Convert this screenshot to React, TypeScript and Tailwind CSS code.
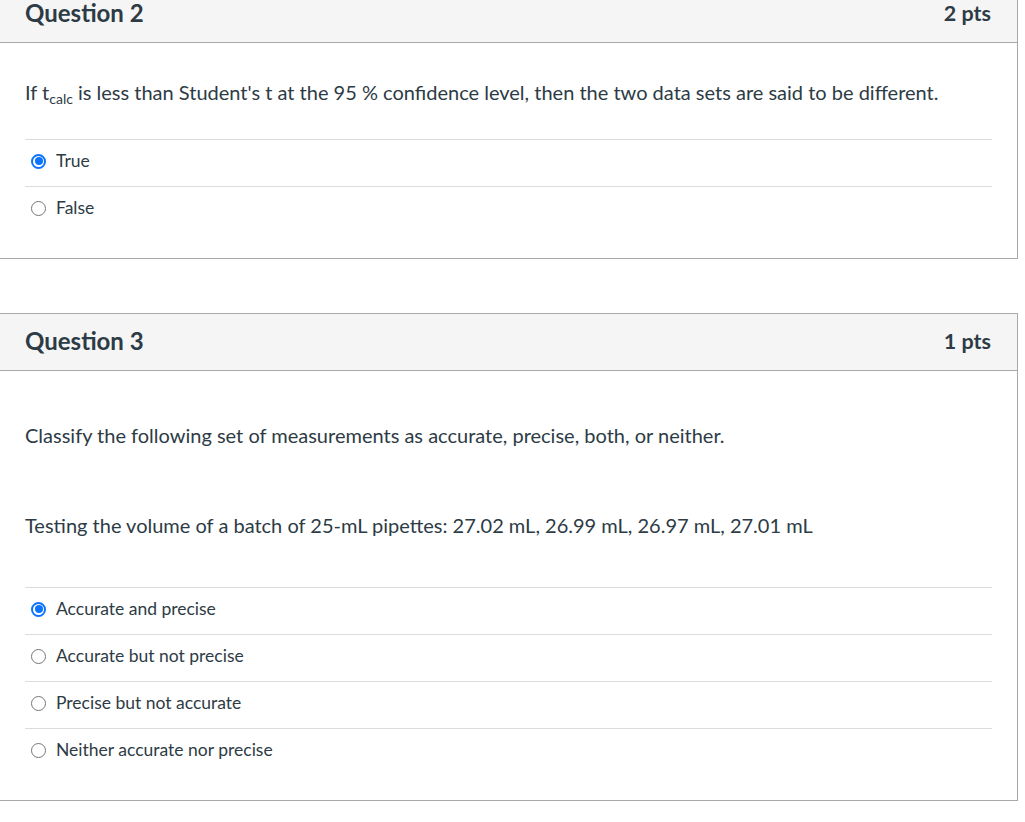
import React from "react";

function Radio({ checked }: { checked: boolean }) {
  return checked ? (
    <span className="flex h-[15px] w-[15px] shrink-0 items-center justify-center rounded-full border-2 border-[#0b74ff] bg-white">
      <span className="h-[8px] w-[8px] rounded-full bg-[#0b74ff]" />
    </span>
  ) : (
    <span className="h-[15px] w-[15px] shrink-0 rounded-full border border-[#767676] bg-white" />
  );
}

function Answer({ label, checked }: { label: string; checked?: boolean }) {
  return (
    <div className="flex h-[47px] items-start border-t border-[#dcdcdc] pl-[6px] pt-[13px]">
      <div className="flex h-[16px] items-center gap-[10px]">
        <Radio checked={!!checked} />
        <span className="text-[17.5px] leading-[16px] text-[#2d3b45]">{label}</span>
      </div>
    </div>
  );
}

function Header({ title, pts }: { title: string; pts: string }) {
  return (
    <div className="flex h-[57px] items-center justify-between border-b border-[#a8a8a8] bg-[#f5f5f5] pb-[2px] pl-[25px] pr-[26px]">
      <span className="text-[24px] leading-[28px] font-bold text-[#2d3b45]">{title}</span>
      <span className="text-[21.5px] leading-[28px] font-bold text-[#2d3b45]">{pts}</span>
    </div>
  );
}

export default function App() {
  return (
    <div
      className="min-h-[822px] bg-white"
      style={{ fontFamily: "Lato, 'Open Sans', sans-serif" }}
    >
      <div className="-ml-px w-[1019px]">
        <div className="-mt-[15px] border border-[#a8a8a8]">
          <Header title="Question 2" pts="2 pts" />
          <div className="px-[25px] pb-[25px]">
            <p className="pt-[35px] pb-[33px] text-[20px] leading-[28px] text-[#2d3b45]">
              If t<sub className="text-[14px]">calc</sub> is less than Student's t at the 95 % confidence level, then the two data sets are said to be different.
            </p>
            <Answer label="True" checked />
            <Answer label="False" />
          </div>
        </div>

        <div className="mt-[54px] border border-[#a8a8a8]">
          <Header title="Question 3" pts="1 pts" />
          <div className="px-[25px] pb-[25px]">
            <p className="pt-[50px] text-[20px] leading-[28px] text-[#2d3b45]">
              Classify the following set of measurements as accurate, precise, both, or neither.
            </p>
            <p className="pt-[62px] pb-[48px] text-[20px] leading-[28px] text-[#2d3b45]">
              Testing the volume of a batch of 25-mL pipettes: 27.02 mL, 26.99 mL, 26.97 mL, 27.01 mL
            </p>
            <Answer label="Accurate and precise" checked />
            <Answer label="Accurate but not precise" />
            <Answer label="Precise but not accurate" />
            <Answer label="Neither accurate nor precise" />
          </div>
        </div>
      </div>
    </div>
  );
}
